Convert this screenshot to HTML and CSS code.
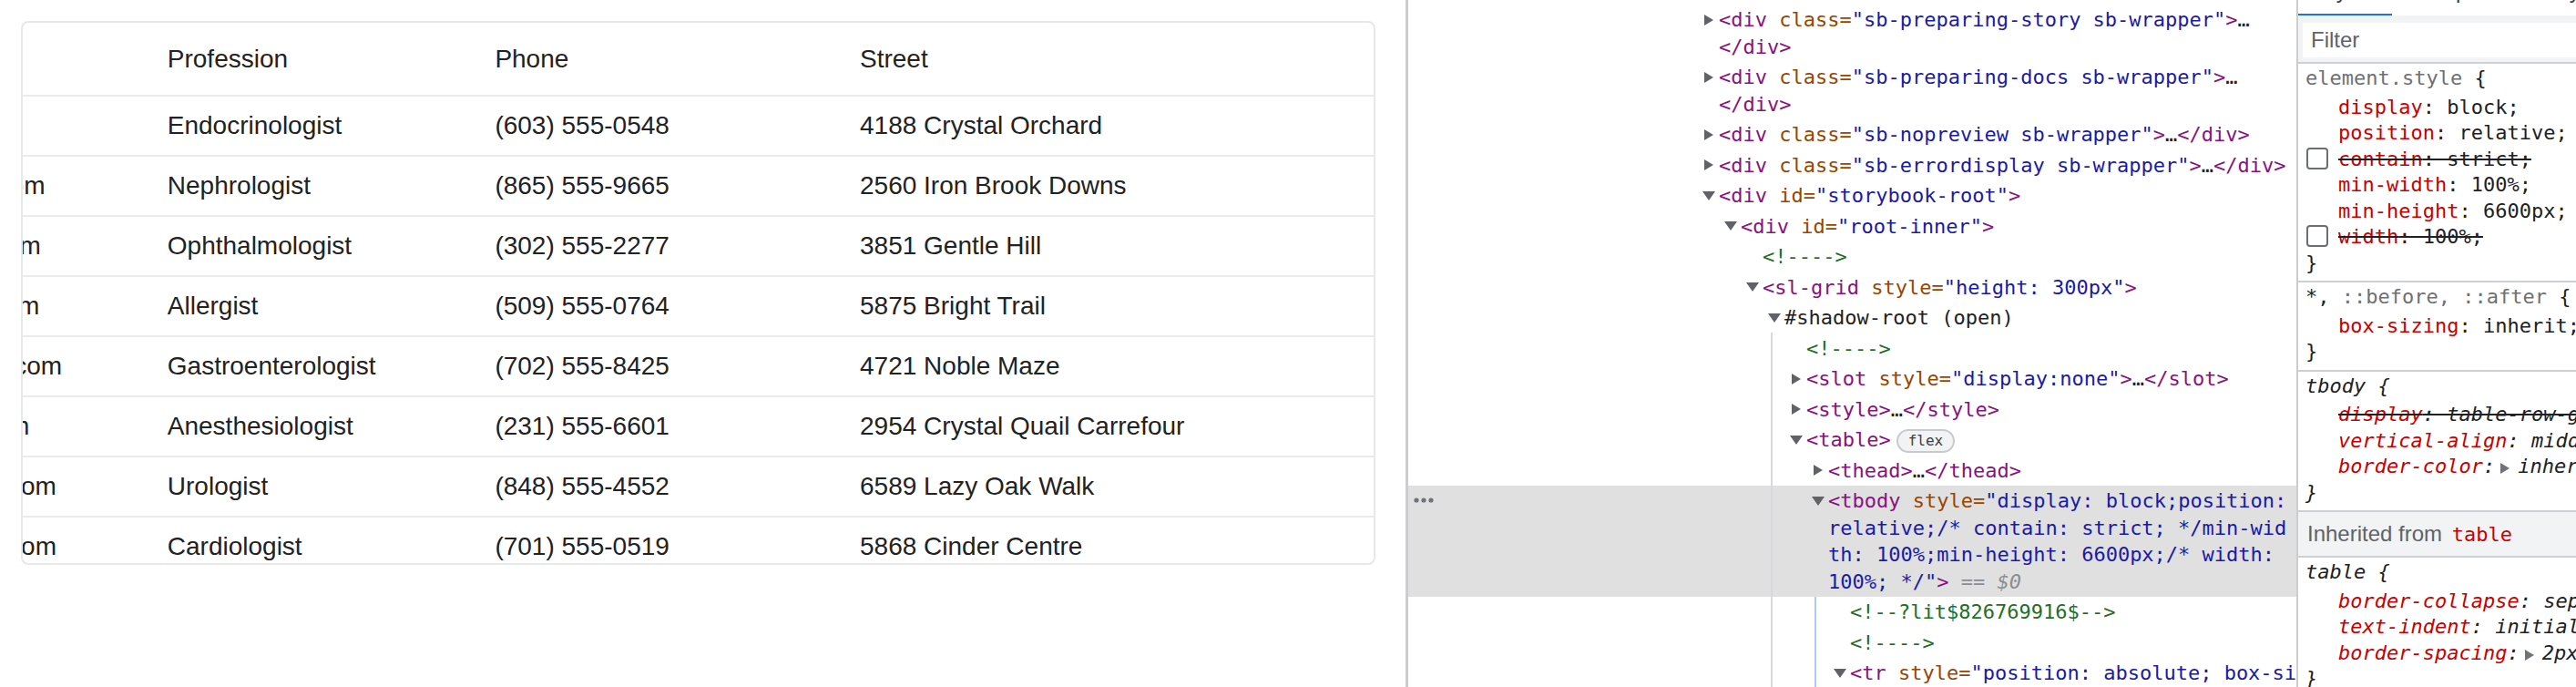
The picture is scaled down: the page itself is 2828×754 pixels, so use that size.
FILE: index.html
```html
<!DOCTYPE html>
<html lang="en">
<head>
<meta charset="utf-8">
<title>Grid story with DevTools</title>
<link rel="stylesheet" href="styles.css">
</head>
<body>
<div class="app">
  <main class="preview">
    <div class="grid-card">
      <table class="grid">
        <colgroup><col class="c-email"><col class="c-prof"><col class="c-phone"><col class="c-street"></colgroup>
        <thead>
          <tr><th>Email</th><th>Profession</th><th>Phone</th><th>Street</th></tr>
        </thead>
        <tbody>
          <tr><td>ava.lopez@example.com</td><td>Endocrinologist</td><td>(603) 555-0548</td><td>4188 Crystal Orchard</td></tr>
          <tr><td>sophia.garcia@example.com</td><td>Nephrologist</td><td>(865) 555-9665</td><td>2560 Iron Brook Downs</td></tr>
          <tr><td>isabella.clark@example.com</td><td>Ophthalmologist</td><td>(302) 555-2277</td><td>3851 Gentle Hill</td></tr>
          <tr><td>james.wilson@example.com</td><td>Allergist</td><td>(509) 555-0764</td><td>5875 Bright Trail</td></tr>
          <tr><td>mia.hernandez@example.com</td><td>Gastroenterologist</td><td>(702) 555-8425</td><td>4721 Noble Maze</td></tr>
          <tr><td>lucas.young@example.com</td><td>Anesthesiologist</td><td>(231) 555-6601</td><td>2954 Crystal Quail Carrefour</td></tr>
          <tr><td>olivia.martinez@example.com</td><td>Urologist</td><td>(848) 555-4552</td><td>6589 Lazy Oak Walk</td></tr>
          <tr><td>harper.nguyen@example.com</td><td>Cardiologist</td><td>(701) 555-0519</td><td>5868 Cinder Centre</td></tr>
        </tbody>
      </table>
    </div>
  </main>

  <section class="devtools">
    <div class="elements">
      <div class="node d0"><span class="ln"><span class="tw r"></span><span class="t">&lt;div</span> <span class="an">class=</span><span class="av">"sb-preparing-story sb-wrapper"</span><span class="t">&gt;</span><span class="el">…</span></span><span class="ln"><span class="t">&lt;/div&gt;</span></span></div>
      <div class="node d0"><span class="ln"><span class="tw r"></span><span class="t">&lt;div</span> <span class="an">class=</span><span class="av">"sb-preparing-docs sb-wrapper"</span><span class="t">&gt;</span><span class="el">…</span></span><span class="ln"><span class="t">&lt;/div&gt;</span></span></div>
      <div class="node d0"><span class="ln"><span class="tw r"></span><span class="t">&lt;div</span> <span class="an">class=</span><span class="av">"sb-nopreview sb-wrapper"</span><span class="t">&gt;</span><span class="el">…</span><span class="t">&lt;/div&gt;</span></span></div>
      <div class="node d0"><span class="ln"><span class="tw r"></span><span class="t">&lt;div</span> <span class="an">class=</span><span class="av">"sb-errordisplay sb-wrapper"</span><span class="t">&gt;</span><span class="el">…</span><span class="t">&lt;/div&gt;</span></span></div>
      <div class="node d0"><span class="ln"><span class="tw d"></span><span class="t">&lt;div</span> <span class="an">id=</span><span class="av">"storybook-root"</span><span class="t">&gt;</span></span></div>
      <div class="node d1"><span class="ln"><span class="tw d"></span><span class="t">&lt;div</span> <span class="an">id=</span><span class="av">"root-inner"</span><span class="t">&gt;</span></span></div>
      <div class="node d2"><span class="ln"><span class="cm">&lt;!----&gt;</span></span></div>
      <div class="node d2"><span class="ln"><span class="tw d"></span><span class="t">&lt;sl-grid</span> <span class="an">style=</span><span class="av">"height: 300px"</span><span class="t">&gt;</span></span></div>
      <div class="node d3"><span class="ln"><span class="tw d"></span><span class="sr">#shadow-root (open)</span></span></div>
      <div class="node d4"><span class="ln"><span class="cm">&lt;!----&gt;</span></span></div>
      <div class="node d4"><span class="ln"><span class="tw r"></span><span class="t">&lt;slot</span> <span class="an">style=</span><span class="av">"display:none"</span><span class="t">&gt;</span><span class="el">…</span><span class="t">&lt;/slot&gt;</span></span></div>
      <div class="node d4"><span class="ln"><span class="tw r"></span><span class="t">&lt;style&gt;</span><span class="el">…</span><span class="t">&lt;/style&gt;</span></span></div>
      <div class="node d4"><span class="ln"><span class="tw d"></span><span class="t">&lt;table&gt;</span><span class="badge">flex</span></span></div>
      <div class="node d5"><span class="ln"><span class="tw r"></span><span class="t">&lt;thead&gt;</span><span class="el">…</span><span class="t">&lt;/thead&gt;</span></span></div>
      <div class="node d5 selected">
        <svg class="dots" width="22" height="6" viewBox="0 0 22 6"><circle cx="3" cy="3" r="2.6"/><circle cx="11" cy="3" r="2.6"/><circle cx="19" cy="3" r="2.6"/></svg>
        <span class="ln"><span class="tw d"></span><span class="t">&lt;tbody</span> <span class="an">style=</span><span class="av">"display: block;position:</span></span>
        <span class="ln"><span class="av">relative;/* contain: strict; */min-wid</span></span>
        <span class="ln"><span class="av">th: 100%;min-height: 6600px;/* width:</span></span>
        <span class="ln"><span class="av">100%; */"</span><span class="t">&gt;</span> <span class="eq">== <i>$0</i></span></span>
      </div>
      <div class="node d6"><span class="ln"><span class="cm">&lt;!--?lit$826769916$--&gt;</span></span></div>
      <div class="node d6"><span class="ln"><span class="cm">&lt;!----&gt;</span></span></div>
      <div class="node d6"><span class="ln"><span class="tw d"></span><span class="t">&lt;tr</span> <span class="an">style=</span><span class="av">"position: absolute; box-sizing: border-box;"</span><span class="t">&gt;</span></span></div>
      <div class="guide g-shadow"></div>
      <div class="guide g-tbody"></div>
    </div>

    <aside class="styles">
      <div class="tabs">
        <span class="tab active"><span class="tl">Styles</span></span>
        <span class="tab"><span class="tl">Computed</span></span>
        <span class="tab"><span class="tl">Layout</span></span>
      </div>
      <div class="toolbar"><div class="filter">Filter</div></div>

      <div class="rule">
        <div class="sl"><span class="muted">element.style</span> {</div>
        <div class="prop"><span class="pn">display</span>: block;</div>
        <div class="prop"><span class="pn">position</span>: relative;</div>
        <div class="prop"><span class="cb"></span><span class="off"><span class="pn">contain</span>: strict;</span></div>
        <div class="prop"><span class="pn">min-width</span>: 100%;</div>
        <div class="prop"><span class="pn">min-height</span>: 6600px;</div>
        <div class="prop"><span class="cb"></span><span class="off"><span class="pn">width</span>: 100%;</span></div>
        <div class="close">}</div>
      </div>

      <div class="rule">
        <div class="sl">*, <span class="muted">::before, ::after</span> {</div>
        <div class="prop"><span class="pn">box-sizing</span>: inherit;</div>
        <div class="close">}</div>
      </div>

      <div class="rule ua">
        <div class="sl">tbody {</div>
        <div class="prop"><span class="off"><span class="pn">display</span>: table-row-group;</span></div>
        <div class="prop"><span class="pn">vertical-align</span>: middle;</div>
        <div class="prop"><span class="pn">border-color</span>:<span class="xt"></span>inherit;</div>
        <div class="close">}</div>
      </div>

      <div class="inherited">Inherited from <span class="it">table</span></div>

      <div class="rule ua">
        <div class="sl">table {</div>
        <div class="prop"><span class="pn">border-collapse</span>: separate;</div>
        <div class="prop"><span class="pn">text-indent</span>: initial;</div>
        <div class="prop"><span class="pn">border-spacing</span>:<span class="xt"></span>2px;</div>
        <div class="close">}</div>
      </div>
    </aside>
  </section>
</div>
</body>
</html>
```

FILE: styles.css
```css
html, body {
  margin: 0;
  padding: 0;
  background: #ffffff;
  overflow: hidden;
}

.app {
  display: flex;
  width: 2828px;
  height: 754px;
}

/* ---------- story preview ---------- */
.preview {
  flex: none;
  width: 1543px;
  box-sizing: border-box;
  padding: 23px 33px 0 23px;
  background: #ffffff;
}

.grid-card {
  height: 597px;
  box-sizing: border-box;
  border: 2px solid #e8e8e8;
  border-radius: 8px;
  overflow: hidden;
  background: #ffffff;
}

.grid {
  table-layout: fixed;
  border-collapse: separate;
  border-spacing: 0;
  width: 1857px;
  margin-left: -361px;
  font-family: "Liberation Sans", Arial, sans-serif;
  font-size: 28px;
  color: #222222;
}

.c-email { width: 495px; }
.c-prof { width: 359px; }
.c-phone { width: 400px; }
.c-street { width: 600px; }

.grid th,
.grid td {
  padding: 0 0 0 24px;
  text-align: left;
  font-weight: normal;
  vertical-align: middle;
  white-space: nowrap;
  overflow: hidden;
  border-bottom: 2px solid #ebebeb;
}

.grid thead tr { height: 81px; }
.grid tbody tr { height: 66px; }

/* ---------- devtools ---------- */
.devtools {
  flex: 1;
  display: flex;
  border-left: 3px solid #cbcdd1;
  min-width: 0;
}

.elements {
  position: relative;
  flex: none;
  width: 975px;
  box-sizing: border-box;
  padding-top: 5px;
  overflow: hidden;
  background: #ffffff;
  font-family: "DejaVu Sans Mono", "Liberation Mono", monospace;
  font-size: 22px;
  color: #222222;
}

.node {
  padding: 2px 0;
  white-space: nowrap;
  line-height: 29.5px;
}

.ln { display: block; }

.d0 { padding-left: 341px; }
.d1 { padding-left: 365px; }
.d2 { padding-left: 389px; }
.d3 { padding-left: 413px; }
.d4 { padding-left: 437px; }
.d5 { padding-left: 461px; }
.d6 { padding-left: 485px; }

.tw {
  display: inline-flex;
  align-items: center;
  width: 18px;
  height: 29.5px;
  margin-left: -18px;
  vertical-align: top;
}
.tw.r::before {
  content: "";
  margin-left: 2px;
  border-left: 10px solid #5f6368;
  border-top: 6px solid transparent;
  border-bottom: 6px solid transparent;
}
.tw.d::before {
  content: "";
  border-top: 10px solid #5f6368;
  border-left: 7px solid transparent;
  border-right: 7px solid transparent;
}

.t { color: #881280; }
.an { color: #994500; }
.av { color: #1a1aa6; }
.cm { color: #236e25; }
.sr { color: #222222; }
.el { color: #222222; }
.eq { color: #8a8d91; }
.eq i { font-style: italic; }

.badge {
  display: inline-block;
  margin-left: 6px;
  padding: 0 11px;
  height: 22px;
  line-height: 22px;
  border: 2px solid #c8cace;
  border-radius: 14px;
  background: #f1f3f4;
  color: #3c4043;
  font-size: 16px;
  vertical-align: middle;
}

.selected {
  position: relative;
  background: #e0e0e0;
}

.dots {
  position: absolute;
  left: 6px;
  top: 13px;
  fill: #6f7378;
}

.guide {
  position: absolute;
  bottom: 0;
  width: 2px;
}
.g-shadow { left: 398px; top: 365px; background: #d6d8db; }
.g-tbody { left: 446px; top: 655px; background: #b3c7f2; }

/* ---------- styles pane ---------- */
.styles {
  flex: 1;
  min-width: 0;
  border-left: 2px solid #cbcdd1;
  overflow: hidden;
  background: #ffffff;
  font-family: "DejaVu Sans Mono", "Liberation Mono", monospace;
  font-size: 22px;
  color: #202124;
  white-space: nowrap;
}

.tabs {
  display: flex;
  height: 17px;
  overflow: hidden;
  background: #ffffff;
}

.tab {
  flex: none;
  box-sizing: border-box;
  height: 17px;
  padding: 0 19px;
  font-family: "Liberation Sans", Arial, sans-serif;
  font-size: 24px;
  line-height: 24px;
  color: #3c4043;
}
.tab.active { border-bottom: 2px solid #1a73e8; }
.tl { display: block; margin-top: -22px; }

.toolbar {
  height: 53px;
  box-sizing: border-box;
  padding: 8px 0 0 5px;
  background: #f1f3f4;
  border-bottom: 2px solid #cdd0d4;
}

.filter {
  height: 38px;
  line-height: 38px;
  padding-left: 9px;
  background: #ffffff;
  font-family: "Liberation Sans", Arial, sans-serif;
  font-size: 24px;
  color: #5f6368;
}

.rule {
  padding: 2px 0 5px;
  border-bottom: 2px solid #cdd0d4;
  line-height: 28.5px;
}
.rule.ua { font-style: italic; }

.sl { padding-left: 8px; margin-bottom: 3px; }
.prop { padding-left: 44px; }
.close { padding-left: 8px; }

.muted { color: #6e7074; }
.pn { color: #c80000; }

.off {
  text-decoration: line-through;
  text-decoration-color: #202124;
}

.cb {
  display: inline-block;
  width: 20px;
  height: 20px;
  margin-left: -35px;
  margin-right: 11px;
  border: 2px solid #6b6e72;
  border-radius: 4px;
  vertical-align: -4px;
}

.xt {
  display: inline-block;
  margin: 0 9px 0 6px;
  border-left: 10px solid #6f7378;
  border-top: 6px solid transparent;
  border-bottom: 6px solid transparent;
  vertical-align: -1px;
}

.inherited {
  height: 48px;
  line-height: 48px;
  padding-left: 10px;
  background: #f1f3f4;
  border-bottom: 2px solid #cdd0d4;
  font-family: "Liberation Sans", Arial, sans-serif;
  font-size: 24px;
  color: #5f6368;
}
.it {
  margin-left: 4px;
  font-family: "DejaVu Sans Mono", "Liberation Mono", monospace;
  font-size: 22px;
  color: #c80000;
}
```
